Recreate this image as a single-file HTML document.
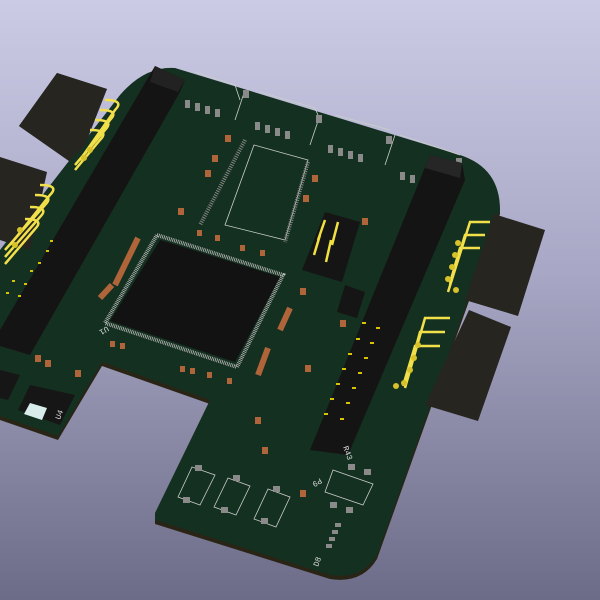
<!DOCTYPE html><html><head><style>html,body{margin:0;padding:0;width:600px;height:600px;overflow:hidden}
body{background:linear-gradient(#cbcbe5 0%,#a8a8c6 45%,#6c6c88 100%)}</style></head><body>
<svg width="600" height="600" viewBox="0 0 600 600" xmlns="http://www.w3.org/2000/svg" style="position:absolute;left:0;top:0">
<path d="M0,255 L120,99 Q145,70 175,72 L460,159 Q500,172 500,214 L377,559 Q362,584 330,579 L155,524 L155,517 L210,404 L102,366 L58,440 L0,420 Z" fill="#2a2416"/>
<path d="M0,250 L120,95 Q145,66 175,68 L460,155 Q500,168 500,210 L377,555 Q362,580 330,575 L155,520 L155,513 L210,400 L102,362 L58,436 L0,416 Z" fill="#143020"/>
<g stroke="#c8d0c8" stroke-width="0.8" fill="none">
<path d="M195,72 L235,85 L240,100 M260,92 L315,108 L320,120 M335,115 L390,130 M400,135 L460,155"/>
<path d="M245,90 L235,120 M320,115 L310,145 M395,135 L385,165"/>
<path d="M254,145 L308,160 L285,240 L225,225 Z"/>
</g>
<g fill="#8a8a8a">
<rect x="185" y="100" width="5" height="8"/><rect x="195" y="103" width="5" height="8"/><rect x="205" y="106" width="5" height="8"/><rect x="215" y="109" width="5" height="8"/>
<rect x="255" y="122" width="5" height="8"/><rect x="265" y="125" width="5" height="8"/><rect x="275" y="128" width="5" height="8"/><rect x="285" y="131" width="5" height="8"/>
<rect x="328" y="145" width="5" height="8"/><rect x="338" y="148" width="5" height="8"/><rect x="348" y="151" width="5" height="8"/><rect x="358" y="154" width="5" height="8"/>
<rect x="400" y="172" width="5" height="8"/><rect x="410" y="175" width="5" height="8"/>
<rect x="243" y="90" width="6" height="8"/><rect x="316" y="115" width="6" height="8"/><rect x="386" y="136" width="6" height="8"/><rect x="456" y="158" width="6" height="8"/>
</g>
<path d="M245,140 L200,225" stroke="#888" stroke-width="4" stroke-dasharray="1 1.3"/>
<path d="M308,162 L285,242" stroke="#888" stroke-width="4" stroke-dasharray="1 1.3"/>
<g fill="#b0643a">
<rect x="225" y="135" width="6" height="7"/><rect x="212" y="155" width="6" height="7"/><rect x="205" y="170" width="6" height="7"/><rect x="178" y="208" width="6" height="7"/>
<rect x="312" y="175" width="6" height="7"/><rect x="303" y="195" width="6" height="7"/><rect x="362" y="218" width="6" height="7"/><rect x="300" y="288" width="6" height="7"/>
<rect x="340" y="320" width="6" height="7"/><rect x="305" y="365" width="6" height="7"/><rect x="255" y="417" width="6" height="7"/><rect x="262" y="447" width="6" height="7"/><rect x="300" y="490" width="6" height="7"/>
<rect x="35" y="355" width="6" height="7"/><rect x="45" y="360" width="6" height="7"/><rect x="75" y="370" width="6" height="7"/>
<rect x="110" y="341" width="5" height="6"/><rect x="120" y="343" width="5" height="6"/><rect x="180" y="366" width="5" height="6"/><rect x="190" y="368" width="5" height="6"/><rect x="207" y="372" width="5" height="6"/><rect x="227" y="378" width="5" height="6"/>
<rect x="197" y="230" width="5" height="6"/><rect x="215" y="235" width="5" height="6"/><rect x="240" y="245" width="5" height="6"/><rect x="260" y="250" width="5" height="6"/>
</g>
<g stroke="#b0643a" stroke-width="6">
<path d="M138,238 L115,285"/><path d="M290,308 L280,330"/><path d="M268,348 L258,375"/><path d="M112,285 L100,298"/>
</g>
<path d="M157,235 L283,275 L237,367 L105,323 Z" fill="none" stroke="#bbb" stroke-width="4" stroke-dasharray="0.8 1"/>
<path d="M160,240 L280,277 L235,362 L110,321 Z" fill="#121212"/>
<path d="M345,285 L365,292 L357,318 L337,312 Z" fill="#151515"/>
<path d="M325,212 L360,222 L342,282 L302,270 Z" fill="#151515"/>
<g stroke="#f0e040" stroke-width="2.5" fill="none"><path d="M318,240 L325,220"/><path d="M332,245 L338,222"/><path d="M326,262 L331,240"/><path d="M314,255 L320,235"/></g>
<path d="M155,66 L185,80 L180,92 L30,355 L0,346 L0,330 Z" fill="#141414"/>
<path d="M155,66 L185,80 L178,92 L150,82 Z" fill="#222"/>
<g fill="#d8c400">
<rect x="18" y="295" width="3" height="2"/><rect x="6" y="292" width="3" height="2"/><rect x="24" y="283" width="3" height="2"/><rect x="12" y="280" width="3" height="2"/><rect x="30" y="270" width="3" height="2"/><rect x="38" y="262" width="3" height="2"/><rect x="46" y="250" width="3" height="2"/><rect x="50" y="240" width="3" height="2"/>
</g>
<path d="M430,155 L462,163 L465,180 L348,455 L310,450 Z" fill="#141414"/>
<path d="M430,155 L462,163 L460,178 L425,168 Z" fill="#262626"/>
<g fill="#d8c400">
<rect x="324" y="413" width="4" height="2"/><rect x="340" y="418" width="4" height="2"/><rect x="330" y="398" width="4" height="2"/><rect x="346" y="402" width="4" height="2"/><rect x="336" y="383" width="4" height="2"/><rect x="352" y="387" width="4" height="2"/><rect x="342" y="368" width="4" height="2"/><rect x="358" y="372" width="4" height="2"/><rect x="348" y="353" width="4" height="2"/><rect x="364" y="357" width="4" height="2"/><rect x="356" y="338" width="4" height="2"/><rect x="370" y="342" width="4" height="2"/><rect x="362" y="322" width="4" height="2"/><rect x="376" y="327" width="4" height="2"/>
</g>
<!-- left connector blocks -->
<path d="M57,73 L107,89 L85,145 L69,161 L19,126 Z" fill="#262520"/>
<path d="M57,73 L107,89 L69,161 L19,126 Z" fill="#262520"/>
<path d="M0,157 L47,172 L30,250 L0,240 Z" fill="#262520"/>
<path d="M494,214 L545,230 L518,316 L465,300 Z" fill="#262520"/>
<path d="M469,310 L511,327 L478,421 L425,405 Z" fill="#262520"/>
<g stroke="#f2e04a" stroke-width="2.5" fill="none">
<path d="M105,100 q20,0 10,10 l-35,50"/><path d="M100,110 q20,0 10,10 l-30,40"/><path d="M95,120 q20,0 10,10 l-30,35"/><path d="M90,130 q20,0 10,10 l-25,30"/>
<path d="M40,185 q20,0 10,10 l-40,50"/><path d="M35,195 q20,0 10,10 l-40,45"/><path d="M30,207 q20,0 10,10 l-35,40"/><path d="M25,219 q20,0 10,10 l-30,35"/>
<path d="M490,222 l-20,0 l-22,70"/><path d="M485,235 l-20,0 l-15,50"/><path d="M480,248 l-20,0 l-10,35"/>
<path d="M450,318 l-25,0 l-20,70"/><path d="M445,332 l-25,0 l-15,55"/><path d="M440,346 l-25,0 l-12,40"/>
</g>
<g fill="#d8c22a"><circle cx="458" cy="243" r="3"/><circle cx="455" cy="255" r="3"/><circle cx="452" cy="267" r="3"/><circle cx="448" cy="279" r="3"/><circle cx="456" cy="290" r="3"/>
<circle cx="418" cy="345" r="3"/><circle cx="414" cy="358" r="3"/><circle cx="410" cy="370" r="3"/><circle cx="404" cy="383" r="3"/><circle cx="396" cy="386" r="3"/>
<circle cx="90" cy="150" r="3"/><circle cx="84" cy="158" r="3"/><circle cx="15" cy="245" r="3"/><circle cx="20" cy="230" r="3"/></g>
<path d="M30,385 L75,395 L60,425 L18,410 Z" fill="#161616"/>
<path d="M0,370 L20,375 L8,400 L0,398 Z" fill="#161616"/>
<path d="M30,403 L47,408 L42,420 L24,414 Z" fill="#d8ecec"/>
<g fill="none" stroke="#ccc" stroke-width="0.8"><path d="M192,467 L215,475 L200,505 L178,497 Z"/><path d="M228,478 L250,486 L236,515 L214,507 Z"/><path d="M268,489 L290,497 L276,527 L254,519 Z"/><path d="M333,470 L373,484 L363,505 L325,492 Z"/></g>
<g fill="#8a8a8a"><rect x="195" y="465" width="7" height="6"/><rect x="183" y="497" width="7" height="6"/><rect x="233" y="475" width="7" height="6"/><rect x="221" y="507" width="7" height="6"/><rect x="273" y="486" width="7" height="6"/><rect x="261" y="518" width="7" height="6"/>
<rect x="348" y="464" width="7" height="6"/><rect x="364" y="469" width="7" height="6"/><rect x="330" y="502" width="7" height="6"/><rect x="346" y="507" width="7" height="6"/>
<rect x="335" y="523" width="6" height="4"/><rect x="332" y="530" width="6" height="4"/><rect x="329" y="537" width="6" height="4"/><rect x="326" y="544" width="6" height="4"/></g>
<g font-family="Liberation Mono,monospace" font-size="8" fill="#ddd">
<text x="318" y="567" transform="rotate(-70 318 567)">D8</text>
<text x="343" y="447" transform="rotate(70 343 447)">R43</text>
<text x="107" y="326" transform="rotate(150 107 326)">U1</text>
<text x="320" y="478" transform="rotate(150 320 478)">P9</text>
<text x="60" y="420" transform="rotate(-70 60 420)">U4</text>
</g>
</svg>
</body></html>
